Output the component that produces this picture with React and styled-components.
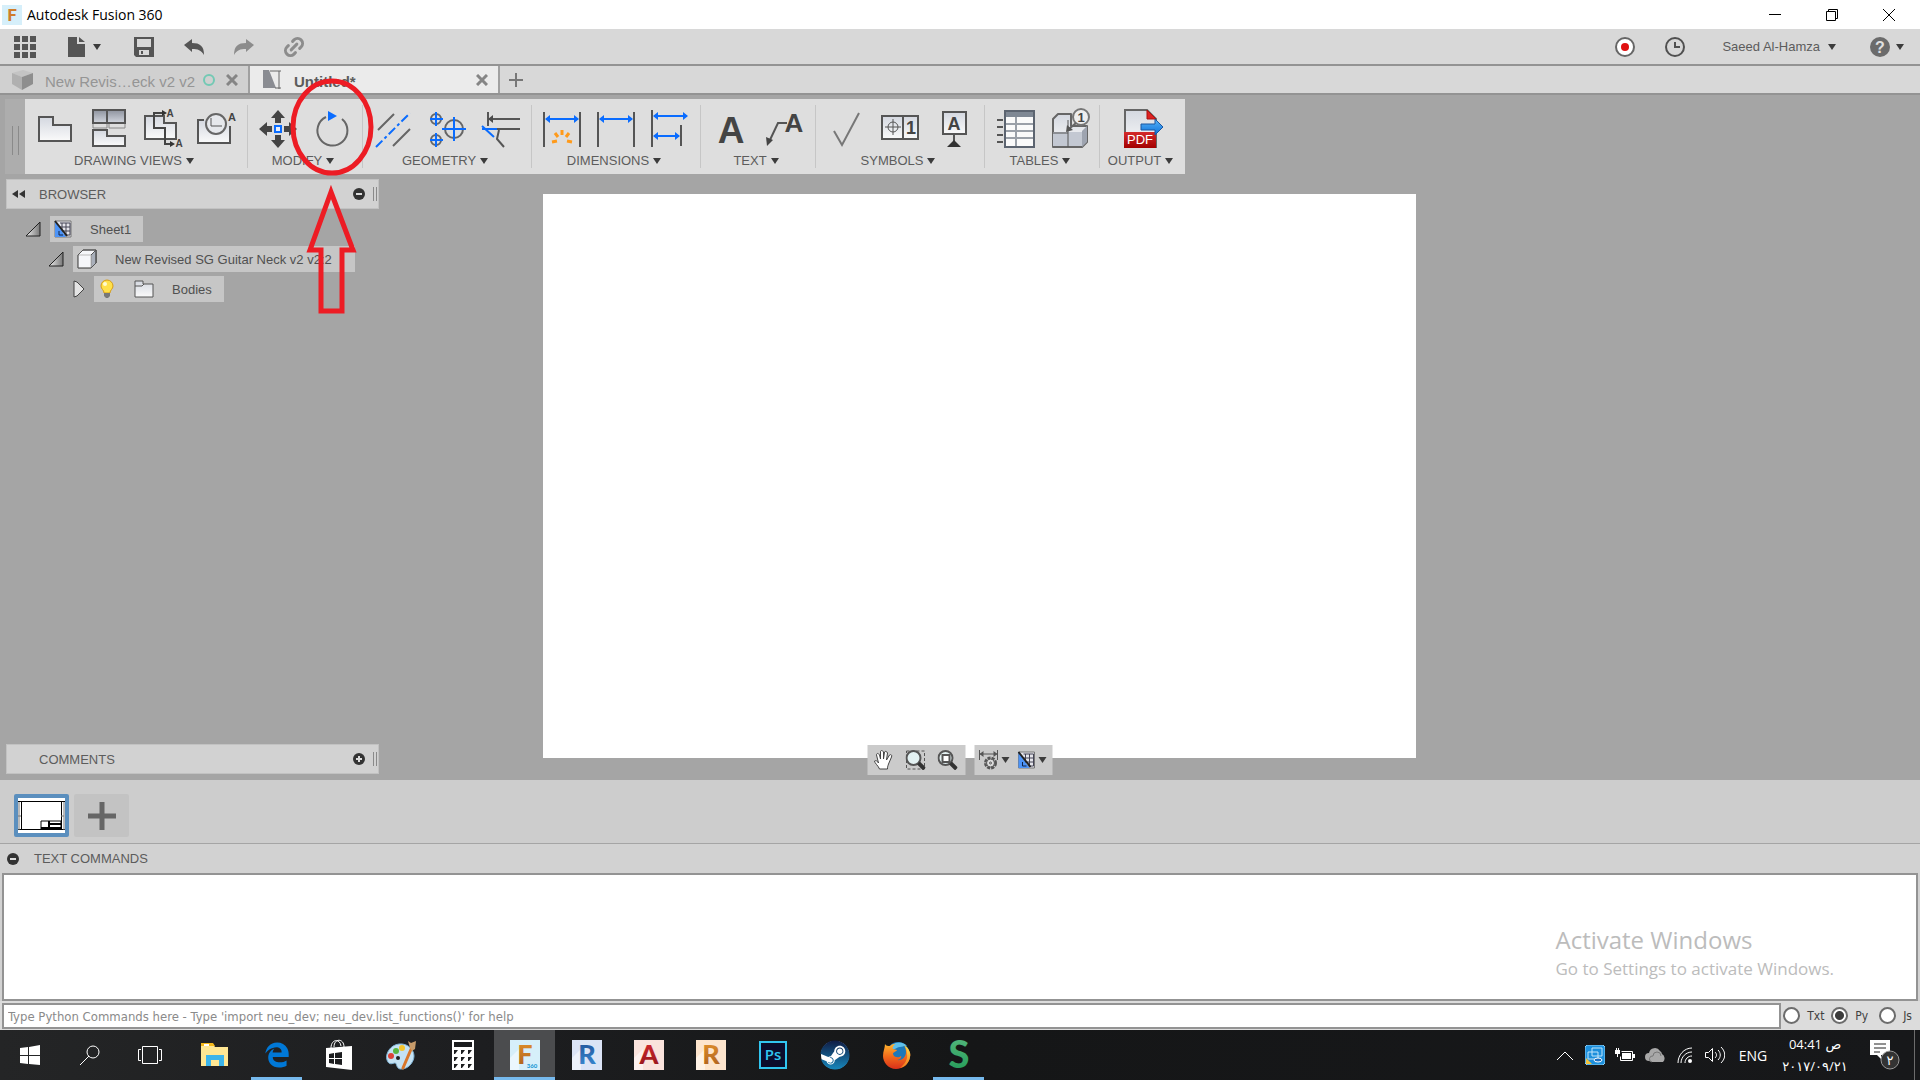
import React from "react";
import styled, { createGlobalStyle } from 'styled-components';
import { FaEdgeLegacy, FaSteam } from "react-icons/fa6";
import { Link2 } from "lucide-react";

const GlobalStyle = createGlobalStyle`
  :root {
    --ui: "Liberation Sans", Arial, sans-serif;
    --system: "Open Sans", "Noto Sans", "DejaVu Sans", sans-serif;
    --console: "DejaVu Sans Condensed", "DejaVu Sans", sans-serif;
    --bar: #d8d8d8;
    --panel: #d2d2d2;
    --workspace: #a5a5a5;
    --line: #939393;
    --text: #5c5c5c;
    --blue: #0a6cff;
    --red: #ed1c24;
  }

  * {
    box-sizing: border-box;
  }

  body {
    margin: 0;
    font-family: var(--ui);
    font-size: 13px;
    color: var(--text);
  }

  button {
    display: flex;
    align-items: center;
    justify-content: center;
    padding: 0;
    border: 0;
    background: none;
    color: inherit;
    font: inherit;
  }

  svg {
    display: block;
    flex: none;
  }
`

const AppContainer = styled.div`
  position: relative;
  display: flex;
  flex-direction: column;
  min-height: 100vh;
  background: var(--panel);
`

const TitleBar = styled.header`
  display: flex;
  align-items: center;
  height: 29px;
  padding: 0 3px 0 2px;
  background: white;
  color: black;
  font-family: var(--system);
`

const AppTitle = styled.h1`
  flex: 1;
  margin: 0 0 0 5px;
  font-size: 14px;
  font-weight: 400;
`

const WindowButton = styled.button`
  width: 57px;
  height: 28px;
`

const QuickBar = styled.nav`
  display: flex;
  height: 37px;
  border-bottom: 2px solid var(--line);
  background: var(--bar);
`

const QuickButton = styled.button`
  width: ${({$wide}) => $wide ? '69px' : '50px'};
  gap: 8px;
  color: ${({$muted}) => $muted ? '#8c8c8c' : '#555'};
`

const Account = styled.div`
  display: flex;
  margin-left: auto;
  padding-right: 16px;
`

const UserButton = styled.button`
  gap: 8px;
  padding: 0 34px 0 22px;
`

const HelpButton = styled.button`
  gap: 6px;
`

const Caret = styled.span`
  border: 4px solid transparent;
  border-top: 6px solid #3c3c3c;
  border-bottom: 0;
`

const TabBar = styled.div`
  display: flex;
  height: 29px;
  border-bottom: 2px solid var(--line);
  background: var(--bar);
`

const Tab = styled.div`
  display: flex;
  align-items: center;
  width: 250px;
  padding: 0 10px 0 12px;
  border-right: 2px solid #a0a0a0;
  background: ${({$active}) => $active ? '#ebebeb' : '#d0d0d0'};
  color: ${({$active}) => $active ? '#5c5c5c' : '#959595'};
  font-size: 15px;
  font-weight: ${({$active}) => $active ? 700 : 400};
`

const TabTitle = styled.span`
  flex: 1;
  padding: 3px 0 0 12px;
  white-space: nowrap;
`

const TabClose = styled.button`
  width: 12px;
  height: 20px;
  margin-left: 11px;
`

const NewTab = styled.button`
  width: 32px;
`

const Workspace = styled.main`
  position: relative;
  display: flex;
  flex-direction: column;
  flex: 1;
  padding-top: 4px;
  background: var(--workspace);
`

const Ribbon = styled.div`
  display: flex;
  height: 75px;
  padding-left: 5px;
`

const Grip = styled.span`
  align-self: center;
  width: ${({$tall}) => $tall ? '7px' : '4px'};
  height: ${({$tall}) => $tall ? '29px' : '14px'};
  border: 1px solid #8a8a8a;
  border-width: 0 1px;
`

const RibbonHandle = styled.div`
  display: flex;
  justify-content: center;
  width: 20px;
  padding-top: 8px;
  background: #adadad;
`

const RibbonGroups = styled.div`
  display: flex;
  background: #dedede;
`

const RibbonGroup = styled.section`
  display: flex;
  flex-direction: column;
  align-items: center;
  min-width: 85px;
  padding: 0 3px;
  margin: 6px 0;
  border-right: 1px solid #c6c6c6;

  &:last-child {
    border: 0;
  }
`

const ToolRow = styled.div`
  display: flex;
`

const ToolButton = styled.button`
  width: 54px;
  height: 46px;
`

const GroupLabel = styled.button`
  gap: 4px;
  height: 22px;
  margin: 2px 4px 0 0;
  white-space: nowrap;
`

const Body = styled.div`
  display: flex;
  flex: 1;
`

const Side = styled.aside`
  display: flex;
  flex-direction: column;
  justify-content: space-between;
  width: 380px;
  padding: 5px 1px 6px 6px;
`

const PanelHeader = styled.div`
  display: flex;
  align-items: center;
  height: 30px;
  padding: 0 1px 0 5px;
  border: 1px solid #c2c2c2;
  background: var(--panel);
`

const PanelTitle = styled.h2`
  flex: 1;
  margin: 0;
  font-size: 13px;
  font-weight: 400;
`

const PanelArrow = styled.button`
  justify-content: flex-start;
  width: 27px;
  height: 20px;
`

const PanelToggle = styled.button`
  width: 12px;
  height: 20px;
  margin-right: ${({$leading}) => $leading ? '15px' : '8px'};
`

const Tree = styled.ul`
  display: flex;
  flex-direction: column;
  gap: 4px;
  margin: 0;
  padding: 7px 0 0 19px;
  list-style: none;
`

const TreeItem = styled.li`
  display: flex;
  align-items: center;
  gap: 9px;
  padding-left: ${({$level}) => $level * 23}px;
`

const TreeLabel = styled.span`
  display: flex;
  align-items: center;
  gap: 18px;
  height: 26px;
  padding: 0 ${({$end}) => $end}px 0 4px;
  background: #c6c6c6;
  color: #505050;
  white-space: nowrap;
`

const Canvas = styled.div`
  display: flex;
  flex: 1;
  padding: 20px 504px 22px 163px;
`

const Paper = styled.div`
  flex: 1;
  background: white;
`

const NavBar = styled.div`
  position: absolute;
  bottom: 5px;
  left: 50%;
  display: flex;
  gap: 9px;
  transform: translateX(-50%);
`

const NavGroup = styled.div`
  display: flex;
  height: 30px;
  padding-right: 2px;
  background: #cbcbcb;
`

const NavButton = styled.button`
  gap: 3px;
  width: ${({$menu}) => $menu ? '38px' : '32px'};
`

const SheetBar = styled.div`
  display: flex;
  gap: 5px;
  height: 63px;
  padding: 14px;
  background: #cdcdcd;
`

const SheetButton = styled.button`
  width: 55px;
  height: 43px;
  border: ${({$active}) => $active ? '4px solid #5b8fbe' : '0'};
  border-radius: 2px;
  background: ${({$active}) => $active ? 'white' : '#c3c3c3'};
`

const CommandPanel = styled.section`
  position: relative;
  border-top: 1px solid #a5a5a5;
`

const CommandHeader = styled.div`
  display: flex;
  align-items: center;
  height: 29px;
  padding-left: 7px;
`

const Output = styled.textarea`
  display: block;
  width: calc(100% - 4px);
  height: 128px;
  margin: 0 2px;
  border: 2px solid var(--line);
  background: white;
  resize: none;
`

const CommandRow = styled.form`
  display: flex;
  align-items: center;
  height: 29px;
  padding: 0 8px 0 2px;
  background: #dcdcdc;
  color: #404040;
  font-family: var(--console);
`

const CommandInput = styled.input`
  flex: 1;
  height: 26px;
  margin-right: 2px;
  padding: 1px 4px 0;
  border: 2px solid var(--line);
  background: white;
  font-family: var(--console);
  font-size: 13px;

  &::placeholder {
    color: #8a8a8a;
  }
`

const Mode = styled.label`
  display: flex;
  align-items: center;
  gap: 7px;
  width: ${({$last}) => $last ? 'auto' : '48px'};
  font-size: 12px;

  input {
    appearance: none;
    width: 17px;
    height: 17px;
    margin: 0;
    border: 2px solid #6c6c6c;
    border-radius: 50%;
    background: white;
  }

  input:checked {
    background: radial-gradient(circle, #3c3c3c 4px, white 5px);
  }
`

const Watermark = styled.div`
  position: absolute;
  right: 86px;
  bottom: 48px;
  color: #bcbcbc;
  font-family: var(--system);
  pointer-events: none;

  strong {
    display: block;
    font-size: 24px;
    font-weight: 400;
    line-height: 32px;
  }

  span {
    font-size: 17px;
    line-height: 26px;
  }
`

const Taskbar = styled.footer`
  display: flex;
  height: 50px;
  background: linear-gradient(to right, #242526, #1d1e20 25%, #151617 50%, #17181a);
  color: white;
  font-family: var(--system);
`

const SystemButton = styled.button`
  width: 60px;
`

const Pinned = styled.div`
  display: flex;
  gap: 1px;
  padding-left: 4px;
`

const TaskButton = styled.button`
  position: relative;
  width: 61px;
  background: ${({$active}) => $active ? '#4b4c4e' : 'none'};

  &:after {
    content: "";
    position: absolute;
    bottom: 0;
    width: ${({$active}) => $active ? '61px' : '51px'};
    height: ${({$active, $running}) => $active || $running ? '3px' : '0'};
    background: #76b9ed;
  }
`

const Tray = styled.div`
  display: flex;
  align-items: center;
  margin-left: auto;
`

const TrayButton = styled.button`
  width: 30px;
  height: 50px;
`

const Language = styled.button`
  width: 46px;
  font-size: 14px;
`

const Clock = styled.time`
  width: 80px;
  padding-right: 2px;
  font-size: 13px;
  line-height: 22px;
  text-align: center;
  white-space: nowrap;
`

const Notifications = styled.button`
  width: 58px;
  height: 50px;
`

const ShowDesktop = styled.button`
  width: 6px;
  height: 50px;
  border-left: 1px solid #6c6c6c;
`

const Annotation = styled.svg`
  position: absolute;
  top: 76px;
  left: 288px;
  pointer-events: none;
`

const Gradients = () => (
  <svg width="0" height="0" style={{position: 'absolute'}} aria-hidden="true">
    <defs>
      <linearGradient id="metal" x1="0" y1="0" x2="0" y2="1">
        <stop offset="0" stopColor="#d4d8e0" />
        <stop offset="1" stopColor="#fafafa" />
      </linearGradient>
      <linearGradient id="steel" x1="0" y1="0" x2="0" y2="1">
        <stop offset="0" stopColor="#8e939e" />
        <stop offset="1" stopColor="#d2d6de" />
      </linearGradient>
      <linearGradient id="sky" x1="0" y1="0" x2="0" y2="1">
        <stop offset="0" stopColor="#5ab4f8" />
        <stop offset="1" stopColor="#0a6fd8" />
      </linearGradient>
      <linearGradient id="crimson" x1="0" y1="0" x2="0" y2="1">
        <stop offset="0" stopColor="#d42a2a" />
        <stop offset="1" stopColor="#a30000" />
      </linearGradient>
      <linearGradient id="expander" x1="0" y1="0" x2="1" y2="0">
        <stop offset="0" stopColor="#eee" />
        <stop offset="1" stopColor="#777" />
      </linearGradient>
      <linearGradient id="fox" x1="0" y1="0" x2="0" y2="1">
        <stop offset="0" stopColor="#ffb52e" />
        <stop offset=".5" stopColor="#f26a1b" />
        <stop offset="1" stopColor="#d9301a" />
      </linearGradient>
      <linearGradient id="fox-tail" x1="0" y1="0" x2="0" y2="1">
        <stop offset="0" stopColor="#ffe04a" />
        <stop offset="1" stopColor="#f07a1c" />
      </linearGradient>
      <linearGradient id="steam" x1="0" y1="0" x2="0" y2="1">
        <stop offset="0" stopColor="#101c44" />
        <stop offset="1" stopColor="#1787bb" />
      </linearGradient>
      <linearGradient id="orange-ink" x1="0" y1="0" x2="0" y2="1">
        <stop offset="0" stopColor="#e9982e" />
        <stop offset="1" stopColor="#a85b1c" />
      </linearGradient>
      <linearGradient id="blue-ink" x1="0" y1="0" x2="0" y2="1">
        <stop offset="0" stopColor="#1d4b92" />
        <stop offset="1" stopColor="#3c8fd8" />
      </linearGradient>
      <linearGradient id="red-ink" x1="0" y1="0" x2="0" y2="1">
        <stop offset="0" stopColor="#dc2b30" />
        <stop offset="1" stopColor="#8f1319" />
      </linearGradient>
      <linearGradient id="green-ink" x1="0" y1="0" x2="0" y2="1">
        <stop offset="0" stopColor="#5cba83" />
        <stop offset="1" stopColor="#1f9a55" />
      </linearGradient>
    </defs>
  </svg>
)

const Tool = ({children}) => (
  <svg width="54" height="44" viewBox="0 0 54 44" fill="none" stroke="#555" strokeWidth="2" fontFamily="Liberation Sans" fontWeight="700">
    {children}
  </svg>
)

const Letter = ({x, y, size, children}) => (
  <text x={x} y={y} fontSize={size} textAnchor="middle" fill="#444" stroke="none">{children}</text>
)

const BaseView = () => (
  <Tool><path d="M11 11h14v8h18v16H11z" fill="url(#metal)" /></Tool>
)

const ProjectedView = () => (
  <Tool>
    <path d="M11 4h32v13H11zM25 4v13" fill="url(#steel)" />
    <path d="M11 18v4h14v-4M27 18v4h16v-4" strokeWidth="1" stroke="#888" />
    <path d="M11 24h14v6h18v10H11z" fill="url(#metal)" />
  </Tool>
)

const SectionView = () => (
  <Tool>
    <path d="M9 10h19v7h12v16H9z" fill="url(#metal)" />
    <path d="M28 7H18v15h11v16h7" stroke="#444" />
    <path d="M26 4l5 3-5 3zM34 35l5 3-5 3z" fill="#333" stroke="none" />
    <Letter x="34" y="11" size="10">A</Letter>
    <Letter x="43" y="41" size="10">A</Letter>
  </Tool>
)

const DetailView = () => (
  <Tool>
    <path d="M14 14H8v23h32V20" fill="url(#metal)" />
    <circle cx="26" cy="18" r="10" fill="#e6e8ec" stroke="#666" />
    <path d="M21 12v8h11" strokeWidth="1" />
    <Letter x="42" y="15" size="11">A</Letter>
  </Tool>
)

const Move = () => (
  <Tool>
    <path d="M27 4l7 8h-4v5h-6v-5h-4zM27 42l7-8h-4v-5h-6v5h-4zM8 23l8-7v4h5v6h-5v4zM46 23l-8-7v4h-5v6h5v4z" fill="#444" stroke="none" />
    <path d="M24 20h6v6h-6z" fill="#e6eefc" stroke="#0a6cff" />
  </Tool>
)

const Rotate = () => (
  <Tool>
    <path d="M21 11a15 15 0 1 0 16 2" stroke="#666" />
    <path d="M23 5l9 5-9 5z" fill="#0a6cff" stroke="none" />
  </Tool>
)

const Centerline = () => (
  <Tool>
    <path d="M12 24L28 8M27 40l17-17" stroke="#666" />
    <path d="M10 41L44 7" stroke="#0a6cff" strokeDasharray="9 3 3 3" />
  </Tool>
)

const CenterMark = () => (
  <Tool>
    <g stroke="#666">
      <circle cx="16" cy="13" r="5" />
      <circle cx="16" cy="34" r="5" />
      <circle cx="34" cy="23" r="9" />
    </g>
    <path d="M10 13h13M16 6v14M10 34h13M16 27v14M22 23h24M34 11v24" stroke="#0a6cff" />
  </Tool>
)

const EdgeExtension = () => (
  <Tool>
    <path d="M14 6v14M14 13h32M23 23h23M25 24l-2 9 7 8" />
    <path d="M14 13l5-4v8z" fill="#4a4a4a" stroke="none" />
    <path d="M8 23h15M8 20l12 11" stroke="#0a6cff" />
  </Tool>
)

// horizontal dimension line with a head on both ends
const DimLine = ({from, to, y}) => (
  <g>
    <path d={`M${from + 1} ${y}H${to - 1}`} stroke="#0a6cff" />
    <path d={`M${from} ${y}l5-4v8zM${to} ${y}l-5-4v8z`} fill="#0a6cff" stroke="none" />
  </g>
)

const SmartDimension = () => (
  <Tool>
    <path d="M9 6v35M45 6v35" />
    <DimLine from={10} to={44} y={13} />
    <path d="M17 36l5-1M20 27l3 4M27 24v5M34 27l-3 4M37 36l-5-1" stroke="#ff9a1a" strokeWidth="3" />
  </Tool>
)

const LinearDimension = () => (
  <Tool>
    <path d="M9 6v35M45 6v35" />
    <DimLine from={10} to={44} y={13} />
  </Tool>
)

const OrdinateDimension = () => (
  <Tool>
    <path d="M9 4v37M38 19v21" />
    <DimLine from={10} to={45} y={10} />
    <DimLine from={10} to={37} y={30} />
  </Tool>
)

const TextTool = () => (
  <Tool><Letter x="27" y="37" size="37">A</Letter></Tool>
)

const LeaderTool = () => (
  <Tool>
    <path d="M29 17h-9l-9 19" />
    <path d="M9 40l-1-9 7 3z" fill="#444" stroke="none" />
    <Letter x="36" y="26" size="26">A</Letter>
  </Tool>
)

const SurfaceTexture = () => (
  <Tool><path d="M15 25l8 14L40 7" stroke="#777" /></Tool>
)

const ToleranceFrame = () => (
  <Tool>
    <path d="M9 10h36v23H9zM30 10v23" fill="url(#metal)" />
    <g strokeWidth="1">
      <circle cx="20" cy="21" r="5" />
      <path d="M12 21h16M20 13v16" />
    </g>
    <Letter x="38" y="28" size="18">1</Letter>
  </Tool>
)

const DatumTool = () => (
  <Tool>
    <path d="M16 6h23v22H16z" fill="url(#metal)" />
    <path d="M27 28v9" />
    <path d="M27 34l7 7H20z" fill="#333" stroke="none" />
    <Letter x="27" y="24" size="18">A</Letter>
  </Tool>
)

const TableTool = () => (
  <Tool>
    <path d="M17 5h29v36H17z" fill="#fafafa" />
    <path d="M17 5h29v6H17z" fill="#7f8894" stroke="none" />
    <path d="M28 11v30M17 18h29M17 25h29M17 32h29" stroke="#9aa0a8" />
    <path d="M17 5h29v36H17z" stroke="#5c6470" />
    <path d="M9 14h6M9 21h6M9 29h6M9 36h6" />
  </Tool>
)

const BalloonTool = () => (
  <Tool>
    <path d="M11 13l5-5h13v12h16v16l-5 5H11z" fill="url(#metal)" stroke="#666" strokeLinejoin="round" />
    <path d="M11 26h30v14H11z" fill="#c3c8d2" stroke="none" />
    <path d="M11 27h15M26 14v27" strokeWidth="1" />
    <path d="M40 25l5-5v16l-5 5z" fill="#9ea4b0" stroke="none" />
    <circle cx="39" cy="11" r="8" fill="#eee" stroke="#777" />
    <path d="M34 17l-7 6" stroke="#666" />
    <path d="M24 26l1-7 6 5z" fill="#555" stroke="none" />
    <Letter x="39" y="16" size="13">1</Letter>
  </Tool>
)

const PdfTool = () => (
  <Tool>
    <path d="M9 4h22l9 9v28H9z" fill="url(#metal)" stroke="#666" />
    <path d="M31 4l9 9h-9z" fill="#d22" stroke="#a11" strokeWidth="1" />
    <path d="M8 26h32v16H8z" fill="url(#crimson)" stroke="none" />
    <text x="24" y="38" fontSize="13" fontWeight="400" textAnchor="middle" fill="white" stroke="none">PDF</text>
    <path d="M25 18h14v-5l8 8-8 8v-5H25z" fill="url(#sky)" stroke="#1a56a0" strokeWidth="1" />
  </Tool>
)

const groups = [
  {
    label: 'DRAWING VIEWS',
    tools: [['Base View', BaseView], ['Projected View', ProjectedView], ['Section View', SectionView], ['Detail View', DetailView]]
  },
  { label: 'MODIFY', tools: [['Move', Move], ['Rotate', Rotate]] },
  {
    label: 'GEOMETRY',
    tools: [['Centerline', Centerline], ['Center Mark', CenterMark], ['Edge Extension', EdgeExtension]]
  },
  {
    label: 'DIMENSIONS',
    tools: [['Dimension', SmartDimension], ['Linear Dimension', LinearDimension], ['Ordinate Dimension', OrdinateDimension]]
  },
  { label: 'TEXT', tools: [['Text', TextTool], ['Leader', LeaderTool]] },
  {
    label: 'SYMBOLS',
    tools: [['Surface Texture', SurfaceTexture], ['Feature Control Frame', ToleranceFrame], ['Datum Identifier', DatumTool]]
  },
  { label: 'TABLES', tools: [['Table', TableTool], ['Balloon', BalloonTool]] },
  { label: 'OUTPUT', tools: [['Output PDF', PdfTool]] }
]

const CrossIcon = () => (
  <svg width="12" height="12" viewBox="0 0 12 12" stroke="#858585" strokeWidth="3"><path d="M1 1l10 10M11 1L1 11" /></svg>
)

const ToggleIcon = ({open}) => (
  <svg width="12" height="12" viewBox="0 0 12 12">
    <circle cx="6" cy="6" r="6" fill="#333" />
    <path d={open ? 'M3 6h6' : 'M3 6h6M6 3v6'} stroke="#ddd" strokeWidth="2" />
  </svg>
)

const SheetIcon = () => (
  <svg width="18" height="18" viewBox="0 0 18 18" fill="none">
    <path d="M1 1h16v16H1z" fill="#e4e4ea" stroke="#777" />
    <path d="M6 3h10M6 7h10M6 11h10M12 3v12M8 3v12M16 3v12M9 15h7" stroke="#445" />
    <path d="M1 1v16h11z" fill="#4d94f7" />
    <path d="M1 1l12 15" stroke="#222" strokeWidth="2" />
    <path d="M5 11v4h4" stroke="#124" />
  </svg>
)

const BodyIcon = () => (
  <svg width="20" height="20" viewBox="0 0 20 20" fill="#f6f7fa" stroke="#555" strokeLinejoin="round">
    <path d="M1 6l5-5h13v13l-5 5H1z" />
    <path d="M14 6l5-5v13l-5 5z" fill="#a9afba" />
    <path d="M1 6h13v13H1z" stroke="#bbb" />
    <path d="M1 6l5-5h13v13l-5 5H1z" fill="none" />
  </svg>
)

const BulbIcon = () => (
  <svg width="18" height="20" viewBox="0 0 18 20">
    <path d="M9 1a6 6 0 0 0-6 6c0 3 3 4 3 7h6c0-3 3-4 3-7a6 6 0 0 0-6-6z" fill="#ffe14a" stroke="#d79c14" />
    <circle cx="7" cy="5" r="2" fill="#fffbd0" />
    <path d="M6 14h6v3l-2 2H8l-2-2z" fill="#777" />
  </svg>
)

const FolderIcon = () => (
  <svg width="20" height="18" viewBox="0 0 20 18" fill="url(#metal)" stroke="#555">
    <path d="M1 1h8v3h10v13H1z" />
    <path d="M1 6h7l2-2" fill="none" />
  </svg>
)

const OpenArrow = () => (
  <svg width="16" height="16" viewBox="0 0 16 16"><path d="M15 1v14H1z" fill="url(#expander)" stroke="#222" /></svg>
)

const ClosedArrow = () => (
  <svg width="14" height="18" viewBox="0 0 14 18"><path d="M3 1l3 1 7 7-7 7-3 1z" fill="#e4e4e4" stroke="#444" /></svg>
)

const Product = ({letter, ink, paper, note}) => (
  <svg width="30" height="30" viewBox="0 0 30 30" fontFamily="Lato" fontWeight="900" textAnchor="middle" overflow="visible">
    <path d="M0 0h30v30H0z" fill={paper} />
    <path d="M0 18l9-9v21H0z" fill="white" opacity=".5" />
    <text x="15" y="24" fontSize="27" fill={`url(#${ink})`}>{letter}</text>
    {note && <text x="22" y="28" fontSize="6" fill="#1d9ad6">{note}</text>}
  </svg>
)

const ExplorerIcon = () => (
  <svg width="28" height="24" viewBox="0 0 28 24">
    <path d="M0 1h12l2 3h13v19H0z" fill="#ffe793" />
    <path d="M0 0h12l2 3H0z" fill="#f5b91c" />
    <path d="M3 1h5v2H3z" fill="white" />
    <path d="M5 12h18v11h-5v-6h-8v6H5z" fill="#3cb4ea" />
  </svg>
)

const StoreIcon = () => (
  <svg width="28" height="32" viewBox="0 0 28 32">
    <path d="M6 9c0-9 9-10 10-2M9 8c0-9 10-9 10 0" fill="none" stroke="white" strokeWidth="1" />
    <path d="M1 9l26-2v24L1 28z" fill="white" />
    <path d="M4 15l5-1v5H4zM10 14l7-1v6h-7zM4 20h5v5l-5-1zM10 20h7v6l-7-1z" fill="#1c1d1f" />
  </svg>
)

const PaintIcon = () => (
  <svg width="32" height="30" viewBox="0 0 32 30">
    <path d="M14 4C5 5 0 14 2 20s6 3 8 3 1 5 5 6c8 1 14-7 14-13S23 3 14 4z" fill="#c4e2f4" stroke="#7fb2d4" />
    <circle cx="6" cy="16" r="3" fill="#dc4238" />
    <circle cx="11" cy="11" r="3" fill="#58b540" />
    <circle cx="17" cy="8" r="3" fill="#f5c52d" />
    <circle cx="13" cy="18" r="2" fill="#222" />
    <path d="M27 7L18 28" stroke="#d9772a" strokeWidth="3" strokeLinecap="round" />
    <path d="M25 8l-2-7 3 2 5-2-1 8-3 2z" fill="#c79b6a" />
  </svg>
)

const CalculatorIcon = () => (
  <svg width="22" height="30" viewBox="0 0 22 30">
    <path d="M0 0h22v30H0z" fill="white" />
    <path d="M2 2h18v5H2z" fill="#1c1d1f" />
    {[10, 17, 24].map(y => [2, 9, 16].map(x => <path key={`${x}-${y}`} d={`M${x} ${y}h4l-3 4h-1z`} fill="#1c1d1f" />))}
  </svg>
)

const PhotoshopIcon = () => (
  <svg width="28" height="28" viewBox="0 0 28 28">
    <path d="M1 1h26v26H1z" fill="#0b0d2c" stroke="#31c5f0" strokeWidth="2" />
    <text x="14" y="19" fontFamily="Open Sans" fontSize="15" fontWeight="600" textAnchor="middle" fill="#31c5f0">Ps</text>
  </svg>
)

const SteamIcon = () => (
  <svg width="30" height="30" viewBox="0 0 30 30">
    <circle cx="15" cy="15" r="14" fill="white" />
    <FaSteam size="30" style={{fill: 'url(#steam)'}} />
  </svg>
)

const FirefoxIcon = () => (
  <svg width="30" height="30" viewBox="0 0 30 30">
    <circle cx="16" cy="13" r="11" fill="#1d78b8" />
    <path d="M10 5c5-4 12-3 15 1-3-1-4 1-7 1s-4 3-8 2z" fill="#5fc0ea" />
    <path d="M3 4c1 2 3 2 5 2 2-2 4-2 5-2-2 2-3 4-2 5l4 1c-1 2-4 2-4 4 1 4 6 4 8 2 1 1-1 4-4 4 5 1 9-3 9-8 0-3-1-5-2-6 5 3 7 7 6 11-1 7-7 12-14 12C6 29 1 22 1 16 1 11 3 8 3 4z" fill="url(#fox)" />
    <path d="M22 5c5 3 7 8 6 12-1 6-5 10-10 11 5-4 8-9 7-14 0-4-1-7-3-9z" fill="url(#fox-tail)" />
  </svg>
)

const SIcon = () => (
  <svg width="30" height="32" viewBox="0 0 30 32" overflow="visible">
    <text x="15" y="29" fontFamily="Lato" fontSize="38" fontWeight="900" textAnchor="middle" fill="url(#green-ink)">S</text>
  </svg>
)

const apps = [
  { name: 'File Explorer', icon: <ExplorerIcon /> },
  { name: 'Edge', icon: <FaEdgeLegacy size={26} color="#0078d7" />, running: true },
  { name: 'Store', icon: <StoreIcon /> },
  { name: 'Paint', icon: <PaintIcon /> },
  { name: 'Calculator', icon: <CalculatorIcon /> },
  { name: 'Fusion 360', icon: <Product letter="F" ink="orange-ink" paper="#d6effa" note="360" />, active: true },
  { name: 'Revit', icon: <Product letter="R" ink="blue-ink" paper="#dbe4f6" /> },
  { name: 'AutoCAD', icon: <Product letter="A" ink="red-ink" paper="#fae3dc" /> },
  { name: 'ReCap', icon: <Product letter="R" ink="orange-ink" paper="#fde5cd" /> },
  { name: 'Photoshop', icon: <PhotoshopIcon /> },
  { name: 'Steam', icon: <SteamIcon /> },
  { name: 'Firefox', icon: <FirefoxIcon /> },
  { name: 'Sheets', icon: <SIcon />, running: true }
]

const Title = () => (
  <TitleBar>
    <svg width="20" height="20" viewBox="0 0 20 20" overflow="visible">
      <path d="M0 0h20v20H0z" fill="#d6effa" />
      <text x="10" y="16" fontFamily="Lato" fontSize="17" fontWeight="900" textAnchor="middle" fill="#cf7d2b">F</text>
    </svg>
    <AppTitle>Autodesk Fusion 360</AppTitle>
    <WindowButton aria-label="Minimize">
      <svg width="12" height="12" viewBox="0 0 12 12" stroke="black"><path d="M0 5.5h12" /></svg>
    </WindowButton>
    <WindowButton aria-label="Restore">
      <svg width="12" height="12" viewBox="0 0 12 12" fill="none" stroke="black"><path d="M.5 2.5h9v9h-9zM2.5 2.5v-2h9v9h-2" /></svg>
    </WindowButton>
    <WindowButton aria-label="Close">
      <svg width="12" height="12" viewBox="0 0 12 12" stroke="black"><path d="M0 0l12 12M12 0L0 12" /></svg>
    </WindowButton>
  </TitleBar>
)

const QuickAccess = () => (
  <QuickBar>
    <QuickButton aria-label="Data Panel">
      <svg width="22" height="22" viewBox="0 0 22 22" fill="currentColor">
        {[0, 8, 16].map(y => [0, 8, 16].map(x => <path key={`${x}-${y}`} d={`M${x} ${y}h6v6h-6z`} />))}
      </svg>
    </QuickButton>
    <QuickButton $wide aria-label="File">
      <svg width="17" height="20" viewBox="0 0 17 20" fill="currentColor"><path d="M0 0h9v7h8v13H0zM11 0l6 5h-6z" /></svg>
      <Caret />
    </QuickButton>
    <QuickButton aria-label="Save">
      <svg width="20" height="20" viewBox="0 0 20 20" fill="currentColor"><path fillRule="evenodd" d="M0 0h20v20H2l-2-2zM3 2v8h14V2zM5 13v5h10v-5zM7 14h2v3H7z" /></svg>
    </QuickButton>
    <QuickButton aria-label="Undo">
      <svg width="20" height="16" viewBox="0 0 20 16" fill="currentColor"><path d="M0 6l8-6v4c8 0 12 3 12 12-3-5-6-6-12-6v3z" /></svg>
    </QuickButton>
    <QuickButton $muted aria-label="Redo">
      <svg width="20" height="16" viewBox="0 0 20 16" fill="currentColor"><path d="M20 6l-8-6v4C4 4 0 7 0 16c3-5 6-6 12-6v3z" /></svg>
    </QuickButton>
    <QuickButton $muted aria-label="Link">
      <svg width="24" height="24" viewBox="0 0 24 24">
        <g transform="rotate(-45 12 12)"><Link2 size={24} strokeWidth={3} /></g>
      </svg>
    </QuickButton>
    <Account>
      <QuickButton aria-label="Record">
        <svg width="20" height="20" viewBox="0 0 20 20">
          <circle cx="10" cy="10" r="9" fill="white" stroke="#666" strokeWidth="2" />
          <circle cx="10" cy="10" r="4" fill="#e01010" />
        </svg>
      </QuickButton>
      <QuickButton aria-label="Job Status">
        <svg width="20" height="20" viewBox="0 0 20 20" fill="none" stroke="#505050">
          <circle cx="10" cy="10" r="9" strokeWidth="2" />
          <path d="M10 5v5h5" strokeWidth="2" />
        </svg>
      </QuickButton>
      <UserButton>Saeed Al-Hamza<Caret /></UserButton>
      <HelpButton aria-label="Help">
        <svg width="20" height="20" viewBox="0 0 20 20">
          <circle cx="10" cy="10" r="10" fill="#6b6b6b" />
          <text x="10" y="16" fontSize="16" fontWeight="700" textAnchor="middle" fill="#e0e0e0">?</text>
        </svg>
        <Caret />
      </HelpButton>
    </Account>
  </QuickBar>
)

const DocumentTabs = () => (
  <TabBar>
    <Tab>
      <svg width="21" height="20" viewBox="0 0 21 20">
        <path d="M0 3l11-3 10 3-11 4z" fill="#c4c4c4" />
        <path d="M0 3l10 4v13L0 14z" fill="#b0b0b0" />
        <path d="M21 3L10 7v13l11-6z" fill="#8e8e8e" />
      </svg>
      <TabTitle>New Revis…eck v2 v2</TabTitle>
      <svg width="12" height="12" viewBox="0 0 12 12"><circle cx="6" cy="6" r="5" fill="none" stroke="#73c9b4" strokeWidth="2" /></svg>
      <TabClose aria-label="Close New Revised SG Guitar Neck"><CrossIcon /></TabClose>
    </Tab>
    <Tab $active>
      <svg width="20" height="20" viewBox="0 0 20 20" fill="none" stroke="#666">
        <path d="M1 0h6l7 18H1z" fill="#8a8c92" stroke="none" />
        <path d="M8 1h11M17 1v18M13 18h6" />
      </svg>
      <TabTitle>Untitled*</TabTitle>
      <TabClose aria-label="Close Untitled"><CrossIcon /></TabClose>
    </Tab>
    <NewTab aria-label="New tab">
      <svg width="14" height="14" viewBox="0 0 14 14" stroke="#777" strokeWidth="2"><path d="M0 7h14M7 0v14" /></svg>
    </NewTab>
  </TabBar>
)

const Browser = () => (
  <div>
    <PanelHeader>
      <PanelArrow aria-label="Collapse browser">
        <svg width="13" height="8" viewBox="0 0 13 8" fill="#333"><path d="M6 0v8L0 4zM13 0v8L7 4z" /></svg>
      </PanelArrow>
      <PanelTitle>BROWSER</PanelTitle>
      <PanelToggle aria-label="Hide browser"><ToggleIcon open /></PanelToggle>
      <Grip />
    </PanelHeader>
    <Tree>
      <TreeItem $level={0}><OpenArrow /><TreeLabel $end={12}><SheetIcon />Sheet1</TreeLabel></TreeItem>
      <TreeItem $level={1}><OpenArrow /><TreeLabel $end={23}><BodyIcon />New Revised SG Guitar Neck v2 v2:2</TreeLabel></TreeItem>
      <TreeItem $level={2}><ClosedArrow /><TreeLabel $end={12}><BulbIcon /><FolderIcon />Bodies</TreeLabel></TreeItem>
    </Tree>
  </div>
)

const ViewNav = () => (
  <NavBar>
    <NavGroup>
      <NavButton aria-label="Pan">
        <svg width="20" height="20" viewBox="0 0 20 20" fill="white" stroke="#444" strokeLinejoin="round">
          <path d="M6 19c-1-3-5-6-5-8 1-1 3 0 4 2L3 5c0-2 2-2 3 0l1 4V2c0-2 2-2 3 0v7l1-7c1-1 2-1 3 1l-1 7 3-5c1-1 3 0 2 2l-3 7c-1 3-1 3-1 5z" />
        </svg>
      </NavButton>
      <NavButton aria-label="Zoom Window">
        <svg width="20" height="20" viewBox="0 0 20 20" fill="none" stroke="#555">
          <path d="M1 1h18v18H1z" strokeDasharray="3 2" />
          <circle cx="8" cy="8" r="7" fill="#e3f1f2" strokeWidth="2" />
          <path d="M13 13l6 6" stroke="#333" strokeWidth="4" />
        </svg>
      </NavButton>
      <NavButton aria-label="Fit">
        <svg width="20" height="20" viewBox="0 0 20 20" fill="none" stroke="#555">
          <circle cx="8" cy="8" r="7" fill="#e3f1f2" strokeWidth="2" />
          <path d="M5 5h7v7H5z" fill="white" strokeWidth="2" />
          <path d="M13 13l6 6" stroke="#333" strokeWidth="4" />
        </svg>
      </NavButton>
    </NavGroup>
    <NavGroup>
      <NavButton $menu aria-label="Annotation Settings">
        <svg width="20" height="20" viewBox="0 0 20 20" fill="none" stroke="#555">
          <path d="M1 0v10M19 0v10M1 4h18" />
          <path d="M1 4l4-3v6zM19 4l-4-3v6z" fill="#555" stroke="none" />
          <circle cx="12" cy="13" r="5" strokeWidth="3" strokeDasharray="3 1" />
          <circle cx="12" cy="13" r="4" fill="#ddd" />
          <circle cx="12" cy="13" r="1" />
        </svg>
        <Caret />
      </NavButton>
      <NavButton $menu aria-label="Sheet Settings"><SheetIcon /><Caret /></NavButton>
    </NavGroup>
  </NavBar>
)

const Sheets = () => (
  <SheetBar>
    <SheetButton $active aria-label="Sheet 1">
      <svg width="47" height="33" viewBox="0 0 47 33" fill="none" stroke="black">
        <path d="M0 2.500h47M0 30.500h47M3.500 3v28M43.500 3v28" />
        <path d="M1 3v28M46 3v28M0 17h3M43 17h3" stroke="#777" />
        <path d="M23 22h20v8H23z" fill="white" />
        <path d="M31 22v7M31 25h12M23 29h20" strokeWidth="2" />
      </svg>
    </SheetButton>
    <SheetButton aria-label="Add sheet">
      <svg width="28" height="28" viewBox="0 0 28 28" stroke="#666" strokeWidth="5"><path d="M0 14h28M14 0v28" /></svg>
    </SheetButton>
  </SheetBar>
)

const TextCommands = () => (
  <CommandPanel>
    <CommandHeader>
      <PanelToggle $leading aria-label="Hide text commands"><ToggleIcon open /></PanelToggle>
      <PanelTitle>TEXT COMMANDS</PanelTitle>
    </CommandHeader>
    <Output readOnly aria-label="Command output" />
    <CommandRow>
      <CommandInput aria-label="Command" placeholder="Type Python Commands here - Type 'import neu_dev; neu_dev.list_functions()' for help" />
      <Mode><input type="radio" name="mode" />Txt</Mode>
      <Mode><input type="radio" name="mode" defaultChecked />Py</Mode>
      <Mode $last><input type="radio" name="mode" />Js</Mode>
    </CommandRow>
    <Watermark>
      <strong>Activate Windows</strong>
      <span>Go to Settings to activate Windows.</span>
    </Watermark>
  </CommandPanel>
)

const SystemTray = () => (
  <Tray>
    <TrayButton aria-label="Show hidden icons">
      <svg width="16" height="9" viewBox="0 0 16 9" fill="none" stroke="white"><path d="M0 9l8-8 8 8" /></svg>
    </TrayButton>
    <TrayButton aria-label="Graphics settings">
      <svg width="20" height="20" viewBox="0 0 20 20" fill="none" stroke="white">
        <path d="M2 0h16l2 2v16l-2 2H2l-2-2V2z" fill="#1c8fdc" stroke="#8fd0f5" />
        <path d="M1 13l6 6H1z" fill="#f3c33c" stroke="none" />
        <path d="M7 3h10v8H7zM3 7h10v7H3z" stroke="#bfe4fa" />
        <ellipse cx="13" cy="15" rx="4" ry="2" fill="#1c6fc0" />
      </svg>
    </TrayButton>
    <TrayButton aria-label="Battery">
      <svg width="20" height="14" viewBox="0 0 20 14" fill="none" stroke="white">
        <path d="M6.5 3.5h11v9h-12v-4" />
        <path d="M7 5h9v6H7z" fill="white" stroke="none" />
        <path d="M18 6h2v4h-2zM0 2h5v4H0zM1 0h1v2H1zM3 0h1v2H3zM2 6h1v3H2z" fill="white" stroke="none" />
      </svg>
    </TrayButton>
    <TrayButton aria-label="OneDrive">
      <svg width="20" height="16" viewBox="0 0 20 16" fill="#a8a8a8"><path d="M4 14a4 4 0 0 1 0-8 6 6 0 0 1 11-2 4 4 0 0 1 2 3 5 5 0 0 1 1 8H7z" /><path d="M7 15a3 3 0 0 1 1-6 4 4 0 0 1 8 0" fill="none" stroke="#777" /></svg>
    </TrayButton>
    <TrayButton aria-label="Network">
      <svg width="18" height="18" viewBox="0 0 18 18" fill="none" stroke="white">
        <path d="M2 17C2 9 8 2 16 2M5 17c0-6 5-11 11-11M9 17c0-4 3-7 7-7" />
        <circle cx="14" cy="15" r="2" fill="white" stroke="none" />
      </svg>
    </TrayButton>
    <TrayButton aria-label="Volume">
      <svg width="20" height="18" viewBox="0 0 20 18" fill="none" stroke="white">
        <path d="M.5 6.5h3l4-4v13l-4-4h-3zM10 6c2 2 2 4 0 6M13 4c3 3 3 7 0 10M16 1c5 5 5 11 0 16" />
      </svg>
    </TrayButton>
    <Language>ENG</Language>
    <Clock>04:41 ص<br />٢٠١٧/٠٩/٢١</Clock>
    <Notifications aria-label="Notifications">
      <svg width="30" height="30" viewBox="0 0 30 30">
        <path d="M0 0h20v15h-9v4l-4-4H0z" fill="white" />
        <path d="M4 4h12M4 8h12M4 12h6" stroke="#222" />
        <circle cx="20" cy="20" r="9" fill="#333" stroke="#999" />
        <text x="20" y="25" fontFamily="DejaVu Sans" fontSize="13" textAnchor="middle" fill="white">٢</text>
      </svg>
    </Notifications>
    <ShowDesktop aria-label="Show desktop" />
  </Tray>
)

const App = () => {
  return (
    <AppContainer>
      <GlobalStyle />
      <Gradients />
      <Title />
      <QuickAccess />
      <DocumentTabs />
      <Workspace>
        <Ribbon>
          <RibbonHandle><Grip $tall /></RibbonHandle>
          <RibbonGroups> {
            groups.map(({label, tools}) => (
              <RibbonGroup key={label}>
                <ToolRow>
                  {tools.map(([name, Icon]) => <ToolButton key={name} aria-label={name}><Icon /></ToolButton>)}
                </ToolRow>
                <GroupLabel>{label}<Caret /></GroupLabel>
              </RibbonGroup>
            ))}
          </RibbonGroups>
        </Ribbon>
        <Body>
          <Side>
            <Browser />
            <PanelHeader>
              <PanelArrow as="span" />
              <PanelTitle>COMMENTS</PanelTitle>
              <PanelToggle aria-label="Show comments"><ToggleIcon /></PanelToggle>
              <Grip />
            </PanelHeader>
          </Side>
          <Canvas><Paper /></Canvas>
        </Body>
        <ViewNav />
      </Workspace>
      <Sheets />
      <TextCommands />
      <Taskbar>
        <SystemButton aria-label="Start">
          <svg width="20" height="20" viewBox="0 0 20 20" fill="white"><path d="M0 3l8-1v8H0zM9 2l11-2v10H9zM0 11h8v8l-8-1zM9 11h11v9L9 19z" /></svg>
        </SystemButton>
        <SystemButton aria-label="Search">
          <svg width="20" height="20" viewBox="0 0 20 20" fill="none" stroke="white"><circle cx="13" cy="7" r="6" /><path d="M9 11l-9 9" /></svg>
        </SystemButton>
        <SystemButton aria-label="Task View">
          <svg width="24" height="18" viewBox="0 0 24 18" fill="none" stroke="white"><path d="M4.5.5h15v17h-15zM3 3.5H.5v11H3M21 3.5h2.5v11H21" /></svg>
        </SystemButton>
        <Pinned>
          {apps.map(({name, icon, active, running}) => (
            <TaskButton key={name} aria-label={name} $active={active} $running={running}>{icon}</TaskButton>
          ))}
        </Pinned>
        <SystemTray />
      </Taskbar>
      <Annotation width="88" height="240" viewBox="0 0 88 240" fill="none" stroke="var(--red)" strokeWidth="5" aria-hidden="true">
        <ellipse cx="44" cy="51" rx="39" ry="46" />
        <path d="M43 116L22 174h11v61h21v-61h11z" strokeWidth="5" />
      </Annotation>
    </AppContainer>
  )
}

export default App
